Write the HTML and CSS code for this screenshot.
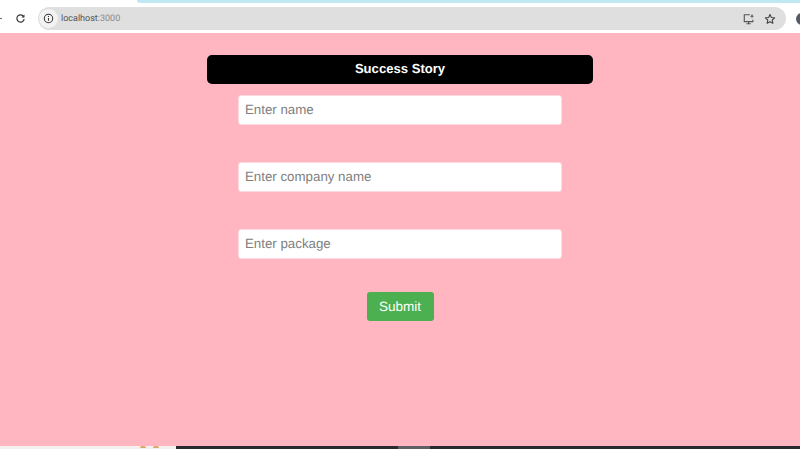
FILE: index.html
```html
<!DOCTYPE html>
<html lang="en">
<head>
<meta charset="utf-8">
<title>Success Story</title>
<link rel="stylesheet" href="styles.css">
</head>
<body>
<div class="browser">
  <div class="tabstrip"><div class="tab-edge"></div></div>
  <div class="toolbar">
    <span class="back-tip"></span>
    <svg class="reload" viewBox="0 0 12 12" width="11" height="11"><path d="M9.600 4.200A4 4 0 1 0 10 6.600" fill="none" stroke="#333" stroke-width="1.300"/><path d="M10.300 1.600v3.300H7z" fill="#333"/></svg>
    <div class="omnibox">
      <span class="site-badge"><svg viewBox="0 0 12 12" width="11" height="11"><circle cx="6" cy="6" r="4.600" fill="none" stroke="#333" stroke-width="1.100"/><path d="M6 5.400v3M6 3.400v1" stroke="#333" stroke-width="1.100"/></svg></span>
      <span class="url"><span class="host">localhost</span>:3000</span>
      <span class="omni-icons">
        <svg viewBox="0 0 14 14" width="12" height="12"><path d="M8 2H1.500v8h10V8M4 12.500h5M6.500 10v2.500" fill="none" stroke="#555" stroke-width="1.300"/><path d="M10.500 1l.7 2 1.800.7-1.800.7-.7 2-.7-2-1.800-.7 1.800-.7z" fill="#555"/></svg>
        <svg viewBox="0 0 14 14" width="12" height="12"><path d="M7 1.700l1.600 3.500 3.800.4-2.800 2.600.8 3.800L7 10.100l-3.400 1.900.8-3.800-2.800-2.600 3.800-.4z" fill="none" stroke="#444" stroke-width="1.300" stroke-linejoin="round"/></svg>
      </span>
    </div>
    <span class="avatar"></span>
  </div>
</div>
<main class="page">
  <h2 class="title">Success Story</h2>
  <form class="story-form">
    <input class="field" type="text" placeholder="Enter name">
    <input class="field" type="text" placeholder="Enter company name">
    <input class="field" type="text" placeholder="Enter package">
    <button class="submit" type="button">Submit</button>
  </form>
</main>
<div class="taskbar">
  <div class="task-light"><span class="dots"></span><span class="dots"></span></div>
  <div class="task-dark"><span class="task-active"></span></div>
</div>
</body>
</html>
```
FILE: styles.css
```css
* { box-sizing: border-box; }
html, body { margin: 0; height: 449px; overflow: hidden; }
body {
  display: flex;
  flex-direction: column;
  font-family: "Liberation Sans", Arial, sans-serif;
  text-rendering: geometricPrecision;
  background: #ffb6c1;
}
.browser { height: 33px; flex: none; background: #fff; }
.tabstrip { height: 4px; padding-left: 137px; background: #fff; }
.tab-edge { height: 3px; background: #bfe8f3; border-bottom-left-radius: 4px; }
.toolbar {
  height: 29px;
  display: flex;
  align-items: center;
}
.back-tip { flex: none; width: 2px; height: 1px; background: #666; }
.reload { flex: none; margin-left: 13px; }
.omnibox {
  flex: none;
  width: 748px;
  height: 23px;
  margin-left: 12px;
  border-radius: 12px;
  background: #dfdfdf;
  display: flex;
  align-items: center;
  padding: 0 10px 0 1px;
}
.site-badge {
  flex: none;
  width: 19px;
  height: 19px;
  border-radius: 50%;
  background: #f3f3f3;
  display: flex;
  align-items: center;
  justify-content: center;
}
.url { margin-left: 3px; font-size: 9px; color: #888; font-family: "Roboto", sans-serif; }
.host { color: #555; }
.omni-icons { margin-left: auto; display: flex; gap: 9px; align-items: center; }
.avatar { flex: none; width: 12px; height: 12px; margin-left: 10px; border-radius: 50%; background: #555a66; }
.page {
  flex: 1;
  display: flex;
  flex-direction: column;
  align-items: center;
  padding-top: 22px;
}
.title {
  width: 386px;
  height: 29px;
  margin: 0 0 11px;
  border-radius: 5px;
  background: #000;
  color: #fff;
  font-size: 13.100px;
  line-height: 28px;
  text-align: center;
  font-weight: bold;
}
.story-form {
  display: flex;
  flex-direction: column;
  align-items: center;
  gap: 37px;
}
.field {
  width: 324px;
  height: 30px;
  padding: 0 6px 2px;
  border: 1px solid #ffd9df;
  border-radius: 3px;
  background: #fff;
  font: 13.300px "Liberation Sans", Arial, sans-serif;
  text-rendering: geometricPrecision;
}
.field::placeholder { color: #808080; opacity: 1; }
.submit {
  width: 67px;
  height: 29px;
  margin-top: -4px;
  padding: 0 0 1px;
  border: 0;
  border-radius: 3px;
  background: #4caf50;
  color: #fff;
  font: 13.500px "Liberation Sans", Arial, sans-serif;
  text-rendering: geometricPrecision;
}
.taskbar { height: 3px; flex: none; display: flex; }
.task-light { width: 176px; background: #f4f1ee; display: flex; justify-content: flex-end; gap: 7px; padding-right: 17px; }
.dots { width: 6px; height: 2px; background: #d9a86c; border-radius: 3px 3px 0 0; }
.task-dark { flex: 1; background: #2a2a2e; padding-left: 222px; }
.task-active { display: block; width: 32px; height: 3px; background: #5f5f63; }
```
